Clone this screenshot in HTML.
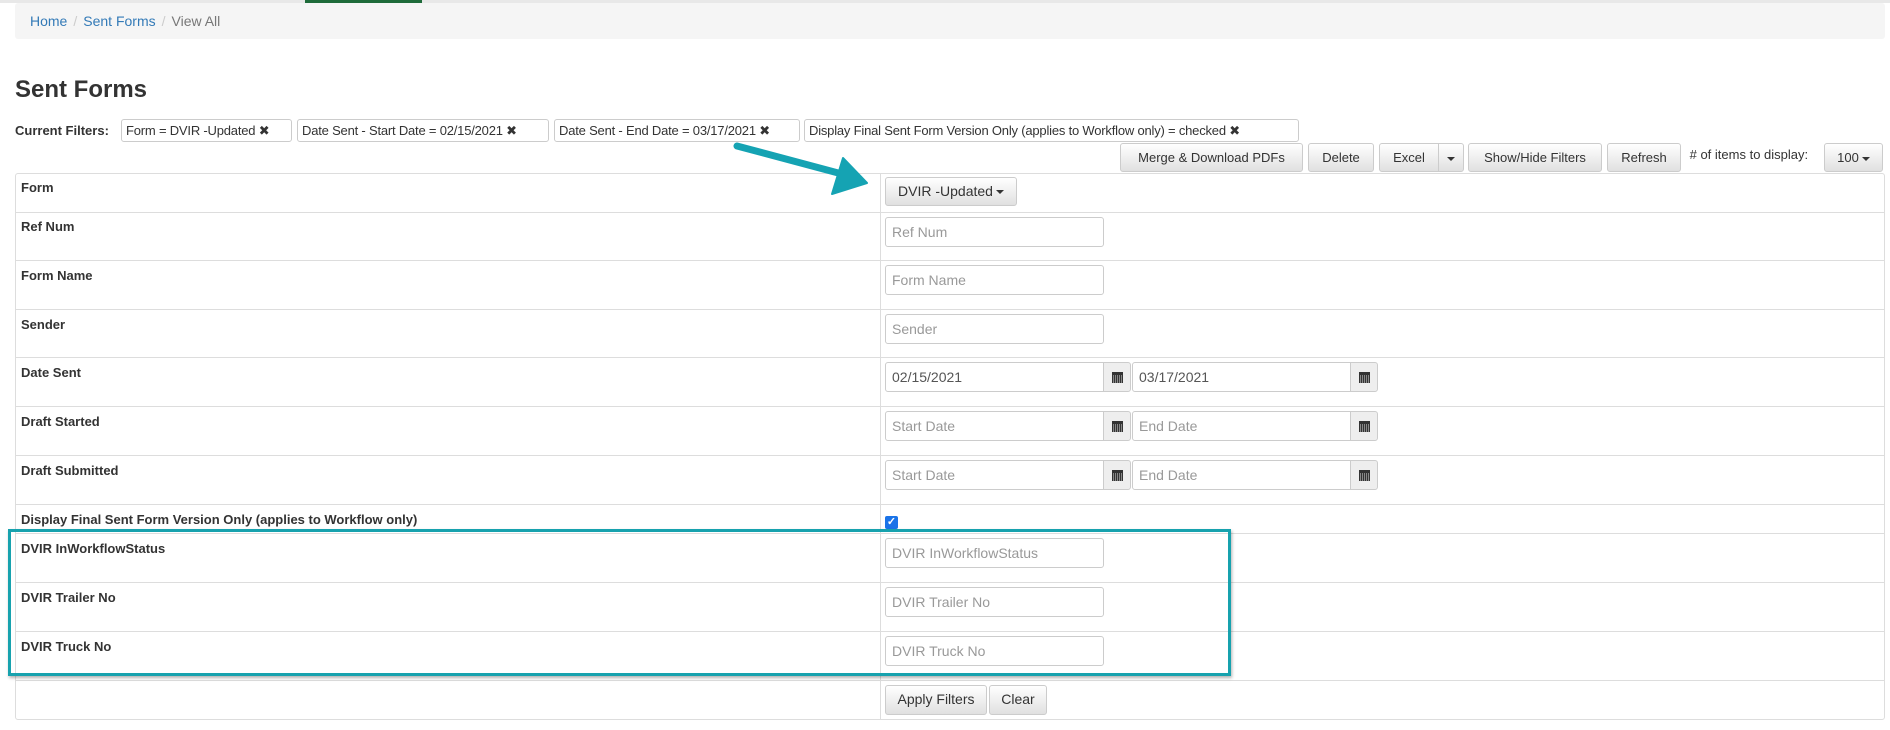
<!DOCTYPE html>
<html><head><meta charset="utf-8"><style>
*{box-sizing:border-box}
body{margin:0;width:1890px;height:730px;background:#fff;font-family:"Liberation Sans",Arial,sans-serif;color:#333;position:relative;overflow:hidden}
.a{position:absolute}
.topbar{left:0;top:0;width:1890px;height:3px;background:#e8e8e8}
.green{left:305px;top:0;width:117px;height:3px;background:#1e6b3a}
.bc{left:15px;top:3px;width:1870px;height:36px;background:#f5f5f5;border-radius:3px;font-size:14px;line-height:36px;padding-left:15px}
.bc a{color:#337ab7}.bc .s{color:#ccc;padding:0 6px}.bc .v{color:#777}
h1{position:absolute;left:15px;top:76px;margin:0;font-size:24px;font-weight:bold;color:#333}
.cf{left:15px;top:123px;font-size:13px;font-weight:bold;line-height:16px}
.tag{position:absolute;top:119px;height:23px;border:1px solid #ccc;border-radius:3px;font-size:13px;line-height:21px;padding-left:4px;white-space:nowrap;background:#fff;letter-spacing:-0.2px}
.btn{position:absolute;height:29px;border:1px solid #ccc;border-radius:3px;background:linear-gradient(#fff,#e0e0e0);font-size:13px;line-height:27px;text-align:center;color:#333;white-space:nowrap}
.tbl{left:15px;top:173px;width:1870px;height:547px;border:1px solid #ddd;border-radius:3px}
.hl{position:absolute;left:15px;width:1870px;height:1px;background:#ddd}
.vl{left:880px;top:173px;width:1px;height:547px;background:#ddd}
.lbl{position:absolute;left:21px;font-size:13px;font-weight:bold;line-height:16px}
.in{position:absolute;left:885px;width:219px;height:30px;border:1px solid #ccc;border-radius:3px;font-size:14px;line-height:28px;padding-left:6px;color:#999;background:#fff}
.ad{position:absolute;width:28px;height:30px;border:1px solid #ccc;background:#eee;border-radius:0 3px 3px 0}
.ad i{position:absolute;left:8px;top:9px;width:11px;height:11px;background:repeating-linear-gradient(90deg,#333 0 1px,#888 1px 2px);border-top:3px solid #333}
.car{display:inline-block;width:0;height:0;border-left:4px solid transparent;border-right:4px solid transparent;border-top:4px solid #333;vertical-align:middle;margin-left:3px}
</style></head><body>
<div class="a topbar"></div><div class="a green"></div>
<div class="a bc"><a>Home</a><span class="s">/</span><a>Sent Forms</a><span class="s">/</span><span class="v">View All</span></div>
<h1>Sent Forms</h1>
<div class="a cf">Current Filters:</div>
<div class="tag" style="left:121px;width:171px">Form = DVIR -Updated ✖</div>
<div class="tag" style="left:297px;width:252px">Date Sent - Start Date = 02/15/2021 ✖</div>
<div class="tag" style="left:554px;width:246px">Date Sent - End Date = 03/17/2021 ✖</div>
<div class="tag" style="left:804px;width:495px">Display Final Sent Form Version Only (applies to Workflow only) = checked ✖</div>
<div class="btn" style="left:1120px;top:143px;width:183px">Merge &amp; Download PDFs</div>
<div class="btn" style="left:1308px;top:143px;width:66px">Delete</div>
<div class="btn" style="left:1379px;top:143px;width:60px;border-radius:3px 0 0 3px">Excel</div>
<div class="btn" style="left:1438px;top:143px;width:26px;border-radius:0 3px 3px 0"><span class="car" style="margin:0"></span></div>
<div class="btn" style="left:1468px;top:143px;width:134px">Show/Hide Filters</div>
<div class="btn" style="left:1607px;top:143px;width:74px">Refresh</div>
<div class="a" style="left:1686px;top:147px;font-size:13px">&nbsp;# of items to display:</div>
<div class="btn" style="left:1824px;top:143px;width:59px">100<span class="car"></span></div>
<div class="a tbl"></div>
<div class="hl" style="top:212px"></div><div class="hl" style="top:260px"></div><div class="hl" style="top:309px"></div><div class="hl" style="top:357px"></div><div class="hl" style="top:406px"></div><div class="hl" style="top:455px"></div><div class="hl" style="top:504px"></div><div class="hl" style="top:533px"></div><div class="hl" style="top:582px"></div><div class="hl" style="top:631px"></div><div class="hl" style="top:680px"></div>
<div class="a vl"></div>
<div class="lbl" style="top:180px">Form</div>
<div class="lbl" style="top:219px">Ref Num</div>
<div class="lbl" style="top:268px">Form Name</div>
<div class="lbl" style="top:317px">Sender</div>
<div class="lbl" style="top:365px">Date Sent</div>
<div class="lbl" style="top:414px">Draft Started</div>
<div class="lbl" style="top:463px">Draft Submitted</div>
<div class="lbl" style="top:512px">Display Final Sent Form Version Only (applies to Workflow only)</div>
<div class="lbl" style="top:541px">DVIR InWorkflowStatus</div>
<div class="lbl" style="top:590px">DVIR Trailer No</div>
<div class="lbl" style="top:639px">DVIR Truck No</div>
<div class="btn" style="left:885px;top:177px;width:132px;height:29px;font-size:14px">DVIR -Updated<span class="car"></span></div>
<div class="in" style="top:217px">Ref Num</div>
<div class="in" style="top:265px">Form Name</div>
<div class="in" style="top:314px">Sender</div>
<div class="in" style="top:362px;color:#555;border-radius:3px 0 0 3px">02/15/2021</div><div class="ad" style="left:1103px;top:362px"><i></i></div>
<div class="in" style="left:1132px;top:362px;color:#555;border-radius:3px 0 0 3px">03/17/2021</div><div class="ad" style="left:1350px;top:362px"><i></i></div>
<div class="in" style="top:411px;border-radius:3px 0 0 3px">Start Date</div><div class="ad" style="left:1103px;top:411px"><i></i></div>
<div class="in" style="left:1132px;top:411px;border-radius:3px 0 0 3px">End Date</div><div class="ad" style="left:1350px;top:411px"><i></i></div>
<div class="in" style="top:460px;border-radius:3px 0 0 3px">Start Date</div><div class="ad" style="left:1103px;top:460px"><i></i></div>
<div class="in" style="left:1132px;top:460px;border-radius:3px 0 0 3px">End Date</div><div class="ad" style="left:1350px;top:460px"><i></i></div>
<div class="a" style="left:885px;top:516px;width:13px;height:13px;background:#1a73e8;border-radius:2px;color:#fff;font-size:11px;line-height:13px;text-align:center;font-weight:bold">✓</div>
<div class="in" style="top:538px">DVIR InWorkflowStatus</div>
<div class="in" style="top:587px">DVIR Trailer No</div>
<div class="in" style="top:636px">DVIR Truck No</div>
<div class="btn" style="left:885px;top:685px;width:102px;height:30px;font-size:14px">Apply Filters</div>
<div class="btn" style="left:989px;top:685px;width:58px;height:30px;font-size:14px">Clear</div>
<div class="a" style="left:8px;top:529px;width:1223px;height:147px;border:3px solid #17a2ae;box-shadow:1px 2px 3px rgba(0,0,0,.3)"></div>
<svg class="a" style="left:0;top:0" width="1890" height="730"><line x1="737" y1="146" x2="842" y2="174" stroke="#15a3b3" stroke-width="7" stroke-linecap="round"/><polygon points="867,183 843,158 832,194" fill="#15a3b3" stroke="#15a3b3" stroke-width="2" stroke-linejoin="round"/></svg>
</body></html>
